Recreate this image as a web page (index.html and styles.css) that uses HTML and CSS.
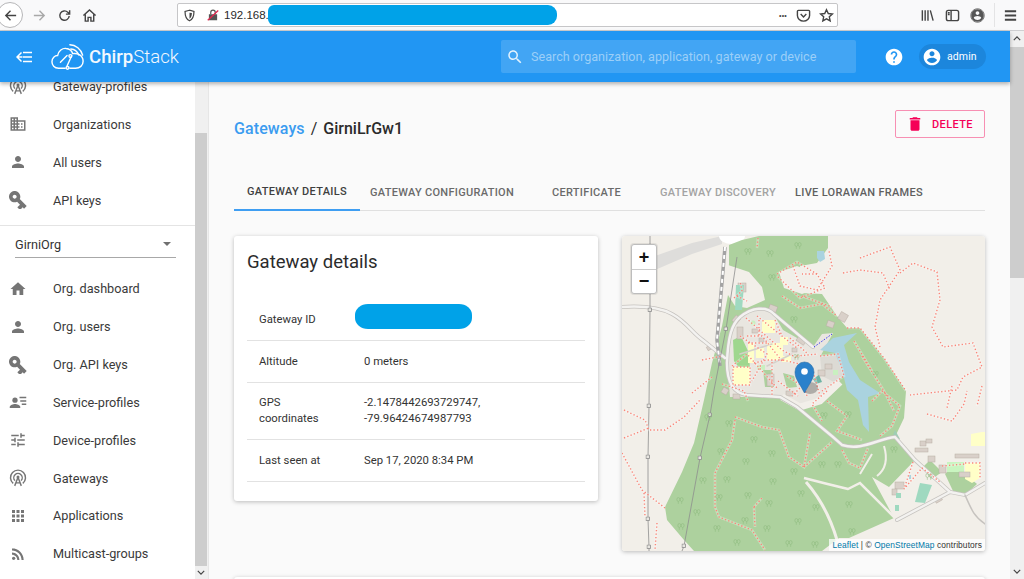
FILE: index.html
```html
<!DOCTYPE html>
<html lang="en">
<head>
<meta charset="utf-8">
<title>ChirpStack</title>
<link rel="stylesheet" href="styles.css">
</head>
<body>
<svg class="defs" width="0" height="0" aria-hidden="true">
  <symbol id="i-tower" viewBox="0 0 24 24"><g fill="none" stroke="currentColor" stroke-width="1.900"><path d="M5.600 19.200A10 10 0 1 1 18.400 19.200"/><path d="M8 15.500A5.600 5.600 0 1 1 16 15.500"/><path d="M12 11 7.600 22.500M12 11l4.400 11.500M9.300 18.500h5.400"/></g><circle cx="12" cy="10.500" r="2" fill="currentColor"/></symbol>
  <symbol id="i-domain" viewBox="0 0 24 24"><path d="M12 7V3H2v18h20V7H12zM6 19H4v-2h2v2zm0-4H4v-2h2v2zm0-4H4V9h2v2zm0-4H4V5h2v2zm4 12H8v-2h2v2zm0-4H8v-2h2v2zm0-4H8V9h2v2zm0-4H8V5h2v2zm10 12h-8v-2h2v-2h-2v-2h2v-2h-2V9h8v10zm-2-8h-2v2h2v-2zm0 4h-2v2h2v-2z"/></symbol>
  <symbol id="i-person" viewBox="0 0 24 24"><path d="M12 12c2.210 0 4-1.790 4-4s-1.790-4-4-4-4 1.790-4 4 1.790 4 4 4zm0 2c-2.670 0-8 1.340-8 4v2h16v-2c0-2.660-5.330-4-8-4z"/></symbol>
  <symbol id="i-key" viewBox="2.500 2.500 19 19"><path transform="rotate(45 12 12)" d="M7,14A2,2 0 0,1 5,12A2,2 0 0,1 7,10A2,2 0 0,1 9,12A2,2 0 0,1 7,14M12.650,10C11.830,7.670 9.610,6 7,6A6,6 0 0,0 1,12A6,6 0 0,0 7,18C9.610,18 11.830,16.330 12.650,14H17V18H21V14H23V10H12.650Z"/></symbol>
  <symbol id="i-home" viewBox="0 0 24 24"><path d="M10 20v-6h4v6h5v-8h3L12 3 2 12h3v8z"/></symbol>
  <symbol id="i-service" viewBox="0 0 24 24"><circle cx="8" cy="9.500" r="3.500"/><path d="M1 20v-1.500c0-2.700 4.700-4 7-4s7 1.300 7 4V20z"/><path d="M14 5h9v2h-9zM15 9.500h8v2h-8zM17 14h6v2h-6z"/></symbol>
  <symbol id="i-tune" viewBox="0 0 24 24"><path d="M3 17v2h6v-2H3zM3 5v2h10V5H3zm10 16v-2h8v-2h-8v-2h-2v6h2zM7 9v2H3v2h4v2h2V9H7zm14 4v-2H11v2h10zm-6-4h2V7h4V5h-4V3h-2v6z"/></symbol>
  <symbol id="i-apps" viewBox="0 0 24 24"><path d="M4 8h4V4H4v4zm6 12h4v-4h-4v4zm-6 0h4v-4H4v4zm0-6h4v-4H4v4zm6 0h4v-4h-4v4zm6-10v4h4V4h-4zm-6 4h4V4h-4v4zm6 6h4v-4h-4v4zm0 6h4v-4h-4v4z"/></symbol>
  <symbol id="i-rss" viewBox="0 0 24 24"><circle cx="6.180" cy="17.820" r="2.180"/><path d="M4 4.440v2.830c7.030 0 12.730 5.700 12.730 12.730h2.830c0-8.590-6.970-15.560-15.560-15.560zm0 5.660v2.830c3.900 0 7.070 3.170 7.070 7.070h2.830c0-5.470-4.430-9.900-9.900-9.900z"/></symbol>
  <symbol id="i-account" viewBox="0 0 24 24"><path d="M12 2C6.480 2 2 6.480 2 12s4.480 10 10 10 10-4.480 10-10S17.520 2 12 2zm0 3c1.660 0 3 1.340 3 3s-1.340 3-3 3-3-1.340-3-3 1.340-3 3-3zm0 14.200c-2.500 0-4.710-1.280-6-3.220.03-1.990 4-3.080 6-3.080 1.990 0 5.970 1.090 6 3.080-1.290 1.940-3.500 3.220-6 3.220z"/></symbol>
  <symbol id="t" viewBox="0 0 12 10"><g fill="none" stroke="#8dbb7e" stroke-width=".8"><ellipse cx="3.500" cy="3.500" rx="2.200" ry="3"/><ellipse cx="8.500" cy="3.500" rx="2.200" ry="3"/><path d="M3.500 6.500V10M8.500 6.500V10"/></g></symbol>
  <symbol id="p" viewBox="0 0 5 5"><rect x=".5" y=".5" width="3.500" height="3.500" fill="#e8e6e1" stroke="#8c8c8c" stroke-width=".8"/></symbol>
  <g id="trails" fill="none">
    <path d="M238 22 268 11 278 34 258 64 253 91 258 111"/>
    <path d="M278 37 291 27 315 36 318 64 310 91 321 111 351 107 360 131 341 141 335 154 288 159"/>
    <path d="M221 37 238 34 261 37 268 54M171 30 178 50 195 54 210 30 207 15"/>
    <path d="M155 38 175 26 195 38 203 52 178 62 155 40M136 2 135 12"/>
    <path d="M113 184 110 204 93 237 93 271 97 281 130 294 143 314M132 271 140 262M132 271 133 291"/>
    <path d="M113 181 140 191 157 194 167 221 182 231 188 197M182 231 210 206M220 214 227 227 238 232 246 212"/>
    <path d="M2 174 23 184 27 194 43 194 62 181 78 164M2 202 27 192M0 217 20 254 43 272M22 257 23 281M35 287 33 314"/>
    <path d="M70 157 90 141M80 124 100 120M115 60 125 65"/>
    <path d="M205 165 225 180 215 195 240 204M205 155 190 168 200 185M250 165 260 155 278 170 270 190 258 200M225 92 238 92 262 122 284 155M240 120 262 155 272 175M232 105 250 135"/>
    <path d="M178 72 200 68 215 80M160 60 178 72M180 60 210 71M195 38 180 38"/>
    <path d="M291 226 282 253 300 232 318 246M343 227H358V243M320 230 343 228"/>
    <path d="M305 178 330 185 342 168 345 155M330 150 325 172M360 150 355 170"/>
    <path d="M112 62 120 55 118 45M124 82 160 114 175 122M110 130 125 118 155 152M118 100 145 118 130 145M135 80 175 112M165 140 180 150 170 160"/>
    <path d="M125 100 140 100 160 125M137 84V100M153 84 160 100M126 107 145 107M132 127 145 124 161 124M111 131 128 131 128 149 111 149zM100 148 122 155 126 165M161 124 190 131 198 160M175 120 196 118M168 102 186 118M150 126 150 160M176 132 185 160M198 120 216 118 222 140 200 155M156 145 176 160"/>
  </g>
</svg>

<header class="browser">
  <span class="nav-back">
    <svg class="bi" viewBox="0 0 16 16"><path d="M14 8H3M8 3 3 8l5 5" class="bs"/></svg>
  </span>
  <svg class="bi forward" viewBox="0 0 16 16"><path d="M2 8h11M8 3l5 5-5 5" class="bs"/></svg>
  <svg class="bi reload" viewBox="0 0 16 16"><path d="M13 8.500A5 5 0 1 1 11.500 4.500L13.500 6.500M13.500 2.500v4h-4" class="bs"/></svg>
  <svg class="bi home" viewBox="0 0 16 16"><path d="M1.500 8 8 2l6.500 6M3.500 7v7h3v-4h3v4h3V7" class="bs"/></svg>
  <div class="urlbar">
    <svg class="ub-shield" viewBox="0 0 16 16"><path d="M8 1.500 2.500 3c0 6 1 9.500 5.500 11.500C12.500 12.500 13.500 9 13.500 3z" class="bs"/><path d="M8 4.500V12C10 11 10.800 8.500 11 5z" fill="#444"/></svg>
    <svg class="ub-lock" viewBox="0 0 16 16"><rect x="2.500" y="7" width="11" height="8" fill="#555"/><path d="M5 7V4.500a3 3 0 0 1 6 0V7" fill="none" stroke="#555" stroke-width="1.600"/><path d="M1 15 15 2" stroke="#e22850" stroke-width="1.800"/></svg>
    <span class="ub-text">192.168.</span>
    <span class="redact-url"></span>
    <span class="ub-right">
      <span class="ub-dots">•••</span>
      <svg class="bi" viewBox="0 0 16 16"><path d="M2.500 2.500h11c.6 0 1 .4 1 1V8a6.500 6 0 0 1-13 0V3.500c0-.6.4-1 1-1zM5 6.500 8 9.500l3-3" class="bs"/></svg>
      <svg class="bi" viewBox="0 0 16 16"><path d="M8 1.800 9.900 5.900l4.400.5-3.300 3 .9 4.400L8 11.600l-3.900 2.200.9-4.400-3.300-3 4.400-.5z" class="bs"/></svg>
    </span>
  </div>
  <div class="br-right">
    <svg class="bi" viewBox="0 0 16 16"><path d="M2.500 2.500v11M5.500 2.500v11M8.500 2.500v11M11 2.500l3 11" class="bs"/></svg>
    <svg class="bi" viewBox="0 0 16 16"><rect x="1.500" y="2.500" width="13" height="11" rx="2" class="bs"/><path d="M6.500 3v10" class="bs"/><path d="M3 5h2M3 7h2" class="bs"/></svg>
    <svg class="bi" viewBox="0 0 24 24"><use href="#i-account" fill="#555"/><circle cx="12" cy="12" r="10.800" fill="none" stroke="#555" stroke-width="1.300"/></svg>
    <span class="br-sep"></span>
    <svg class="bi" viewBox="0 0 16 16"><path d="M2 3.500h12M2 8h12M2 12.500h12" class="bs bs-thick"/></svg>
  </div>
</header>

<div class="window">
  <div class="app">
    <div class="appbar">
      <svg class="menu-ico" viewBox="0 0 16 12"><path d="M6.500 6H16M7 1.500h9M7 10.500h9M5.500 1.500 1 6l4.500 4.500M1 6h5" fill="none" stroke="#fff" stroke-width="1.500"/></svg>
      <svg class="logo" viewBox="0 0 36 28"><g fill="none" stroke="#fff" stroke-width="1.500" stroke-linecap="round"><path d="M15 26.500H8C3.500 26.500 1 23 1 19.500 1 15.500 4 13 7 13 8 8 12 5 16 5.500c3.500.3 6 2.500 7 5.500 5-1 11 2 11 8 0 4.500-3.500 7.500-8 7.500H20"/><path d="M20 1.500c6 0 12 5 13.500 11M21 6c4 .2 7 3 8.500 6.500"/><path d="M17 24 22 13M10 20l7-7"/><circle cx="17.500" cy="26" r="1.500"/><circle cx="20.500" cy="13.500" r="1.500"/></g></svg>
      <span class="brand"><b>Chirp</b>Stack</span>
      <label class="search">
        <svg class="search-ico" viewBox="0 0 24 24"><path d="M15.500 14h-.79l-.28-.27C15.410 12.590 16 11.110 16 9.500 16 5.910 13.090 3 9.500 3S3 5.910 3 9.500 5.910 16 9.500 16c1.610 0 3.090-.59 4.230-1.570l.27.28v.79l5 4.990L20.490 19l-4.990-5zm-6 0C7.010 14 5 11.990 5 9.500S7.010 5 9.500 5 14 7.010 14 9.500 11.990 14 9.500 14z"/></svg>
        <span>Search organization, application, gateway or device</span>
      </label>
      <svg class="help" viewBox="0 0 24 24"><path d="M12 2C6.480 2 2 6.480 2 12s4.480 10 10 10 10-4.480 10-10S17.520 2 12 2zm1 17h-2v-2h2v2zm2.070-7.750l-.9.920C13.450 12.900 13 13.500 13 15h-2v-.5c0-1.100.45-2.100 1.170-2.830l1.240-1.260c.37-.36.59-.86.59-1.410 0-1.100-.9-2-2-2s-2 .9-2 2H8c0-2.210 1.790-4 4-4s4 1.790 4 4c0 .88-.36 1.680-.93 2.250z"/></svg>
      <span class="chip"><svg viewBox="0 0 24 24"><use href="#i-account"/></svg><span>admin</span></span>
    </div>

    <div class="content">
      <nav class="sidebar">
        <ul class="menu menu-top">
          <li><svg><use href="#i-tower"/></svg>Gateway-profiles</li>
          <li><svg><use href="#i-domain"/></svg>Organizations</li>
          <li><svg><use href="#i-person"/></svg>All users</li>
          <li><svg><use href="#i-key"/></svg>API keys</li>
        </ul>
        <div class="org-select"><span>GirniOrg</span><i class="caret"></i></div>
        <ul class="menu menu-org">
          <li><svg><use href="#i-home"/></svg>Org. dashboard</li>
          <li><svg><use href="#i-person"/></svg>Org. users</li>
          <li><svg><use href="#i-key"/></svg>Org. API keys</li>
          <li><svg><use href="#i-service"/></svg>Service-profiles</li>
          <li><svg><use href="#i-tune"/></svg>Device-profiles</li>
          <li><svg><use href="#i-tower"/></svg>Gateways</li>
          <li><svg><use href="#i-apps"/></svg>Applications</li>
          <li><svg><use href="#i-rss"/></svg>Multicast-groups</li>
        </ul>
      </nav>
      <div class="side-scroll">
        <span class="thumb side-thumb"></span>
        <svg class="chev" viewBox="0 0 10 6"><path d="M1 1l4 4 4-4" fill="none" stroke="#444" stroke-width="1.500"/></svg>
      </div>

      <main class="main">
        <div class="title-row">
          <h1 class="crumbs"><a>Gateways</a><span class="slash">/</span><span>GirniLrGw1</span></h1>
          <button class="delete"><svg viewBox="0 0 24 24"><path d="M6 19c0 1.100.9 2 2 2h8c1.100 0 2-.9 2-2V7H6v12zM19 4h-3.500l-1-1h-5l-1 1H5v2h14V4z"/></svg>DELETE</button>
        </div>

        <div class="tabs">
          <span class="tab tab1 active">Gateway details</span>
          <span class="tab tab2">Gateway configuration</span>
          <span class="tab tab3">Certificate</span>
          <span class="tab tab4 disabled">Gateway discovery</span>
          <span class="tab tab5">Live LoRaWAN frames</span>
        </div>

        <div class="columns">
          <section class="card details">
            <h2>Gateway details</h2>
            <div class="row row-id"><span class="k">Gateway ID</span><span class="redact-id"></span></div>
            <div class="row"><span class="k">Altitude</span><span class="v">0 meters</span></div>
            <div class="row row-gps"><span class="k">GPS coordinates</span><span class="v">-2.1478442693729747,<br>-79.96424674987793</span></div>
            <div class="row"><span class="k">Last seen at</span><span class="v">Sep 17, 2020 8:34 PM</span></div>
          </section>

          <section class="card map">
            <svg class="map-art" viewBox="0 0 363 315">
              <rect width="363" height="315" fill="#f2efe9"/>
              <path d="M33 34V20L70 7 100 0V8L70 18z" fill="#dedddb"/>
              <ellipse cx="110" cy="0" rx="13" ry="8" fill="#fff"/>
              <!-- green areas -->
              <g fill="#add19e">
                <path d="M107 9 120 4 137 0H206V12L195 27 178 30 180 57 200 58 215 80 225 92 238 92 262 122 284 155 282 182 273 201 293 224 267 251 250 241 272 282 227 302 217 302 200 315H72L62 304 45 284 43 271 60 236 72 207 82 164 90 127 100 90 106 59 107 27z"/>
                <path d="M330 231 343 238 355 248 343 259 331 255 323 238z"/>
                <path d="M300 232 308 224 320 236 310 243z"/>
              </g>
              <path d="M100 27 127 36 140 51 143 64 125 72 113 70 106 59z" fill="#f2efe9"/>
              <path d="M157 36 175 30 195 38 200 50 180 58 162 52z" fill="#f2efe9"/>
              <!-- village -->
              <path d="M105 127 110 95 118 81 135 73 148 72 161 94 191 111 200 98 211 97 198 121 215 127 218 144 198 164 178 171 158 161 128 161 108 161z" fill="#e9e6e0"/>
              <path d="M111 104 119 100 126 115 128 131 118 133 112 125z" fill="#9fd78e"/>
              <path d="M141 134 150 134 152 151 143 151zM161 137 172 140 175 151 165 152z" fill="#add19e"/>
              <path d="M198 120 216 118 222 140 212 146 200 140z" fill="#dcdad4"/>
              <g fill="#ffffc8">
                <rect x="140" y="84" width="13" height="13"/><rect x="126" y="107" width="6" height="20"/><rect x="145" y="107" width="16" height="17"/><rect x="111" y="131" width="17" height="18"/><rect x="158" y="101" width="8" height="8"/><rect x="134" y="112" width="8" height="10"/><rect x="160" y="120" width="9" height="6"/>
                <path d="M349 198 360 196 363 196V210L349 210z"/><path d="M343 227H358V242L350 247 343 243z"/>
              </g>
              <rect x="325" y="226" width="17" height="10" fill="#c9f5c0"/>
              <circle cx="131" cy="87" r="2.500" fill="#c9f0c0"/>
              <rect x="135" y="129" width="8" height="5" fill="#c9f0c0"/>
              <g fill="#d9d0c9" stroke="#b9aea4" stroke-width=".5">
                <rect x="116" y="47" width="8" height="9"/><rect x="147" y="69" width="8" height="6" transform="rotate(20 150 72)"/><rect x="111" y="80" width="6" height="7" transform="rotate(40 114 84)"/><rect x="115" y="91" width="6" height="12"/><rect x="85" y="110" width="5" height="4" transform="rotate(-30 87 112)"/><rect x="175" y="102" width="9" height="5" transform="rotate(35 179 104)"/><rect x="145" y="138" width="7" height="12"/><rect x="164" y="155" width="7" height="5"/><rect x="298" y="205" width="6" height="5"/><rect x="304" y="203" width="6" height="4"/><rect x="293" y="212" width="13" height="4"/><rect x="306" y="220" width="7" height="6"/><rect x="317" y="229" width="7" height="8"/><rect x="273" y="246" width="9" height="7"/><rect x="270" y="253" width="5" height="6"/><rect x="333" y="218" width="24" height="4"/><rect x="337" y="236" width="11" height="5"/><rect x="313" y="263" width="7" height="3" transform="rotate(-30 316 264)"/><rect x="217" y="77" width="8" height="8" transform="rotate(30 221 81)"/><rect x="205" y="85" width="7" height="6" transform="rotate(20 208 88)"/><rect x="203" y="128" width="7" height="5"/><rect x="196" y="134" width="7" height="6"/><rect x="100" y="152" width="6" height="6" transform="rotate(30 103 155)"/><rect x="111" y="158" width="7" height="5"/><rect x="130" y="93" width="6" height="4"/><rect x="137" y="102" width="5" height="4"/><rect x="170" y="112" width="5" height="4"/></g>
              <!-- water -->
              <path d="M198 114 211 102 235 97 222 109 227 126 238 144 258 157 246 161 247 196 241 189 236 164 225 154 220 134 213 117z" fill="#aad3df"/>
              <path d="M195 15 202 15 203 23 198 26 195 22z" fill="#aad3df"/>
              <rect x="211" y="134" width="5" height="5" fill="#c9f0c0"/>
              <path d="M191 143 197 139 200 146 194 148z" fill="#6fb4a4"/>
              <g fill="#9fd9c0">
                <path d="M298 247 310 249 303 267 293 266z"/><rect x="274" y="257" width="5" height="5"/><rect x="273" y="269" width="4" height="6"/>
                <path d="M114 49 122 49 120 74 113 74z"/>
              </g>
              <rect x="287" y="239" width="2" height="4" fill="#aad3df"/>
              <path d="M273 194 278 203 270 202z" fill="#9fcdb5"/>
              <!-- pale tracks in forest -->
              <g fill="none" stroke="#f2efe9">
                <path d="M182 242 Q205 248 226 253 L238 247 L275 284" stroke-width="2.500"/>
                <path d="M184 246 Q205 270 215 304" stroke-width="3"/>
                <path d="M250 218 238 238M262 210Q268 230 255 240" stroke-width="2"/>
                <path d="M160 161 178 171 198 165 218 146" stroke-width="7"/>
              </g>
              <!-- roads -->
              <g fill="none" stroke-linecap="round">
                <path d="M105 127C106 100 110 88 118 81 130 71 145 70 152 78L191 111M105 127C105 145 110 157 125 159L158 161 175 171 211 201 220 209C240 215 255 203 273 201L293 224 328 256 343 259 363 247M0 71C15 70 35 70 50 78 65 86 70 97 82 105L103 122M328 256 275 284" stroke="#c6c3bf" stroke-width="4"/>
                <path d="M105 127C106 100 110 88 118 81 130 71 145 70 152 78L191 111M105 127C105 145 110 157 125 159L158 161 175 171 211 201 220 209C240 215 255 203 273 201L293 224 328 256 343 259 363 247M0 71C15 70 35 70 50 78 65 86 70 97 82 105L103 122M328 256 275 284" stroke="#f3f2f0" stroke-width="2.500"/>
                <path d="M343 259C350 275 352 280 363 288" stroke="#c6c3bf" stroke-width="1.500"/>
                <path d="M145 130 170 118M118 118 150 108" stroke="#d4d0ca" stroke-width="1.500"/>
              </g>
              <path d="M192 111 210 98" stroke="#3a3af0" stroke-width="1" stroke-dasharray="1.500 1.500" fill="none"/>
              <!-- rail -->
              <path d="M103 11 95 104 98 130" fill="none" stroke="#a3a3a3" stroke-width="3.500"/>
              <path d="M103 11 95 104 98 130" fill="none" stroke="#fff" stroke-width="2" stroke-dasharray="4 4"/>
              <!-- power lines -->
              <g fill="none" stroke="#8e8e8e" stroke-width=".8">
                <path d="M28 0V74L27 170 26 221 26 283 27 311V315"/>
                <path d="M115 21 104 93 92 154 88 179 78 222 62 310 60 315"/>
              </g>
              <use href="#p" x="25.500" y="71.500" width="5" height="5"/><use href="#p" x="24.500" y="167.500" width="5" height="5"/><use href="#p" x="23.500" y="218.500" width="5" height="5"/><use href="#p" x="23.500" y="280.500" width="5" height="5"/><use href="#p" x="24.500" y="308.500" width="5" height="5"/><use href="#p" x="85.500" y="176.500" width="5" height="5"/><use href="#p" x="75.500" y="219.500" width="5" height="5"/><use href="#p" x="59.500" y="307.500" width="5" height="5"/><use href="#p" x="101.500" y="90.500" width="5" height="5"/>
              <!-- trails -->
              <use href="#trails" stroke="#fff" stroke-width="2.600" opacity=".3"/>
              <use href="#trails" stroke="#fa8578" stroke-width="1.400" stroke-dasharray="1.300 2.200"/>
              <!-- trees -->
              <g>
                <use href="#t" x="122" y="12" width="8" height="7"/><use href="#t" x="144" y="14" width="8" height="7"/><use href="#t" x="172" y="6" width="8" height="7"/><use href="#t" x="146" y="38" width="8" height="7"/><use href="#t" x="168" y="80" width="8" height="7"/><use href="#t" x="82" y="178" width="8" height="7"/><use href="#t" x="103" y="184" width="8" height="7"/><use href="#t" x="128" y="200" width="8" height="7"/><use href="#t" x="95" y="212" width="8" height="7"/><use href="#t" x="146" y="214" width="8" height="7"/><use href="#t" x="120" y="222" width="8" height="7"/><use href="#t" x="168" y="232" width="8" height="7"/><use href="#t" x="147" y="242" width="8" height="7"/><use href="#t" x="101" y="240" width="8" height="7"/><use href="#t" x="77" y="241" width="8" height="7"/><use href="#t" x="54" y="261" width="8" height="7"/><use href="#t" x="93" y="258" width="8" height="7"/><use href="#t" x="122" y="256" width="8" height="7"/><use href="#t" x="175" y="254" width="8" height="7"/><use href="#t" x="143" y="264" width="8" height="7"/><use href="#t" x="190" y="268" width="8" height="7"/><use href="#t" x="223" y="265" width="8" height="7"/><use href="#t" x="71" y="273" width="8" height="7"/><use href="#t" x="119" y="281" width="8" height="7"/><use href="#t" x="172" y="282" width="8" height="7"/><use href="#t" x="55" y="287" width="8" height="7"/><use href="#t" x="91" y="289" width="8" height="7"/><use href="#t" x="141" y="289" width="8" height="7"/><use href="#t" x="226" y="292" width="8" height="7"/><use href="#t" x="111" y="303" width="8" height="7"/><use href="#t" x="163" y="304" width="8" height="7"/><use href="#t" x="189" y="305" width="8" height="7"/><use href="#t" x="268" y="210" width="8" height="7"/><use href="#t" x="303" y="237" width="8" height="7"/><use href="#t" x="212" y="225" width="8" height="7"/><use href="#t" x="196" y="225" width="8" height="7"/><use href="#t" x="171" y="118" width="7" height="6"/><use href="#t" x="250" y="135" width="7" height="6"/><use href="#t" x="198" y="176" width="8" height="7"/><use href="#t" x="222" y="175" width="8" height="7"/>
              </g>
              <!-- marker -->
              <ellipse cx="188" cy="152" rx="8" ry="6" fill="#000" opacity=".25"/>
              <path d="M182.500 157C178 148 173 143 173 136A9.500 10 0 0 1 192 136C192 143 187 148 182.500 157z" fill="#2a81cb" stroke="#2a6fa8" stroke-width=".6"/>
              <circle cx="182.500" cy="135.500" r="3.300" fill="#fff"/>
            </svg>
            <div class="zoom"><span>+</span><span>−</span></div>
            <div class="attrib"><a>Leaflet</a> | © <a>OpenStreetMap</a> contributors</div>
          </section>
        </div>

        <section class="card next"></section>
      </main>
    </div>
  </div>

  <div class="page-scroll">
    <svg class="chev chev-up" viewBox="0 0 10 6"><path d="M1 5l4-4 4 4" fill="none" stroke="#444" stroke-width="1.500"/></svg>
    <span class="thumb page-thumb"></span>
    <svg class="chev" viewBox="0 0 10 6"><path d="M1 1l4 4 4-4" fill="none" stroke="#444" stroke-width="1.500"/></svg>
  </div>
</div>
</body>
</html>
```
FILE: styles.css
```css
* { box-sizing: border-box; }
html, body { margin: 0; height: 100%; overflow: hidden; }
body {
  width: 1024px; height: 579px;
  display: flex; flex-direction: column;
  font-family: Roboto, "Liberation Sans", sans-serif;
  color: #212121;
  background: #fafafa;
}
.defs { position: absolute; }
ul { list-style: none; margin: 0; padding: 0; }

/* browser chrome */
.browser {
  height: 31px; flex: none;
  display: flex; align-items: center;
  background: #f9f9fa;
  border-bottom: 1px solid #cfcfd1;
}
.bi { width: 15px; height: 15px; flex: none; display: block; }
.bs { fill: none; stroke: #444; stroke-width: 1.500; }
.bs-thick { stroke-width: 2; }
.nav-back {
  width: 26px; height: 26px; margin-left: -3px; flex: none;
  display: flex; align-items: center; justify-content: center;
  background: #fff; border: 1px solid #b6b6b8; border-radius: 50%;
}
.forward { margin-left: 9px; }
.forward .bs { stroke: #a8a8a8; }
.reload { margin-left: 10px; }
.home { margin-left: 10px; }
.urlbar {
  margin-left: 80px; width: 661px; height: 24px;
  display: flex; align-items: center;
  background: #fff; border: 1px solid #c6c6c8; border-radius: 2px;
  padding-left: 5px;
  position: relative;
}
.ub-shield { width: 13px; height: 13px; }
.ub-lock { width: 12px; height: 12px; margin-left: 11px; }
.ub-text { margin-left: 5px; font: 11.500px "Liberation Sans", sans-serif; color: #2a2a2a; }
.redact-url {
  position: absolute; left: 90px; top: 1px; width: 289px; height: 20px;
  background: #00a2e8; border-radius: 6px 9px 9px 6px;
}
.ub-right { margin-left: auto; display: flex; align-items: center; gap: 8px; padding-right: 3px; }
.ub-dots { font: 7px "Liberation Sans", sans-serif; color: #444; letter-spacing: .2px; margin-right: 1px; }
.br-right { display: flex; align-items: center; gap: 10px; margin-left: 82px; }
.br-sep { width: 1px; height: 24px; background: #e4e4e5; margin: 0 -2px 0 -1px; }

/* window */
.window { flex: 1; min-height: 0; display: flex; }
.app { flex: 1; min-width: 0; display: flex; flex-direction: column; }
.appbar {
  height: 51px; flex: none;
  display: flex; align-items: center;
  background: #2196f3; color: #fff;
  box-shadow: 0 2px 4px rgba(0,0,0,.3);
  position: relative; z-index: 2;
}
.menu-ico { width: 16px; height: 12px; margin-left: 16px; flex: none; }
.logo { width: 34px; height: 27px; margin-left: 19px; flex: none; }
.brand { margin-left: 4px; font-size: 18.600px; font-weight: 300; width: 96px; color: #f2f8fe; }
.brand b { font-weight: 500; }
.search {
  margin-left: 316px; width: 355px; height: 33px;
  display: flex; align-items: center;
  background: rgba(255,255,255,.15); border-radius: 2px;
  font-size: 12.600px; color: #9ccff8;
}
.search-ico { width: 18px; height: 18px; fill: #e3f2fd; margin: 0 7px 0 5px; flex: none; }
.help { width: 20px; height: 20px; fill: #fff; margin-left: 28px; flex: none; }
.chip {
  margin-left: 15px; width: 67px; height: 25px;
  display: flex; align-items: center;
  background: #1c86dc; border-radius: 13px;
  font-size: 10.500px; letter-spacing: .1px;
}
.chip svg { width: 20px; height: 20px; fill: #fff; margin: 0 5px 0 3px; flex: none; }

.content { flex: 1; min-height: 0; display: flex; }

/* sidebar */
.sidebar { width: 195px; flex: none; background: #fff; overflow: hidden; }
.menu li {
  height: 38px; display: flex; align-items: center;
  font-size: 12.700px; color: #3a3a3a;
}
.menu svg { width: 18px; height: 18px; fill: #757575; color: #757575; margin: 0 26px 0 9px; flex: none; }
.menu-top { margin-top: -15px; padding-bottom: 6px; border-bottom: 1px solid #e4e4e4; }
.org-select {
  margin: 8px 19px 0 15px; height: 24px; padding-bottom: 3px;
  display: flex; align-items: center; justify-content: space-between;
  border-bottom: 1px solid #a8a8a8;
  font-size: 12.700px; color: #333;
}
.caret { width: 0; height: 0; margin-right: 5px; border: 4px solid transparent; border-top: 4px solid #707070; border-bottom: 0; }
.menu-org { margin-top: 12px; }
.menu-org li { height: 37.850px; }
.side-scroll {
  width: 14px; flex: none;
  display: flex; flex-direction: column; align-items: center;
  background: #f0f0f0; border-right: 1px solid #e6e6e6;
  padding-right: 1px;
}
.thumb { display: block; width: 100%; background: #cdcdcd; }
.side-thumb { height: 433px; margin-top: 51px; }
.chev { width: 8px; height: 5px; margin-top: 4px; flex: none; }

/* main */
.main { flex: 1; min-width: 0; padding: 28px 25px 0 25px; overflow: hidden; }
.title-row { display: flex; align-items: center; justify-content: space-between; height: 28px; }
.crumbs { margin: 8px 0 0; font-size: 16px; font-weight: 500; display: flex; gap: 6px; color: #2b2b2b; }
.crumbs a { color: #3b9cf0; letter-spacing: .1px; }
.slash { font-weight: 400; }
.delete {
  width: 90px; height: 28px;
  display: flex; align-items: center; justify-content: center; gap: 8px;
  background: transparent; border: 1px solid #f78fb3; border-radius: 2px;
  font: 500 11px Roboto, sans-serif; letter-spacing: .4px; color: #f50057;
  padding: 0 0 0 3px;
}
.delete svg { width: 18px; height: 18px; fill: #f50057; margin-left: -4px; }
.tabs {
  margin-top: 34px; height: 39px;
  display: flex;
  border-bottom: 1px solid #e0e0e0;
}
.tab {
  height: 39px; padding-top: 1px; display: flex; align-items: center; justify-content: center;
  font-size: 11px; font-weight: 500; letter-spacing: .3px; text-transform: uppercase;
  color: #6a6a6a; white-space: nowrap;
}
.tab1 { width: 126px; } .tab2 { width: 164px; } .tab3 { width: 125px; } .tab4 { width: 138px; } .tab5 { width: 144px; }
.tab.active { color: #3f3f3f; border-bottom: 2px solid #3f9ef2; }
.tab.disabled { color: #a3a3a3; }
.tab5 { color: #5f5f5f; }

.columns { margin-top: 25px; display: flex; align-items: flex-start; gap: 24px; }
.card { background: #fff; border-radius: 3px; box-shadow: 0 1px 4px rgba(0,0,0,.25); }
.details { width: 364px; height: 265px; padding: 13px 13px 0 13px; }
.details h2 { margin: 0 0 25px; font-size: 18.500px; font-weight: 400; line-height: 26px; color: #2b2b2b; }
.row {
  height: 42px; display: flex; align-items: center;
  border-bottom: 1px solid #e2e2e2; padding-left: 12px;
  font-size: 11.300px; line-height: 16px; color: #333;
}
.row-id { height: 41px; }
.row-gps { height: 57px; }
.k { width: 105px; flex: none; padding-right: 30px; }
.redact-id { width: 117px; height: 25px; margin: -8px 0 0 -9px; background: #00a2e8; border-radius: 13px / 11px; }

.map { width: 363px; height: 315px; position: relative; overflow: hidden; }
.map-art { display: block; width: 363px; height: 315px; filter: blur(.35px); }
.zoom {
  position: absolute; left: 9px; top: 8px; width: 26px;
  display: flex; flex-direction: column;
  border: 1px solid #bdbdbd; border-radius: 3px; background: #fff;
  box-shadow: 0 0 0 1px rgba(0,0,0,.08);
}
.zoom span { height: 24px; display: flex; align-items: center; justify-content: center; font: 700 18px "Liberation Sans", sans-serif; color: #111; }
.zoom span + span { border-top: 1px solid #ccc; }
.attrib {
  position: absolute; right: 0; bottom: 0; height: 12px; padding: 0 3px;
  background: rgba(255,255,255,.75);
  font: 8.400px/12px "Liberation Sans", sans-serif; color: #333; letter-spacing: .1px;
  white-space: nowrap;
}
.attrib a { color: #0078a8; }
.next { margin-top: 26px; height: 200px; }

.page-scroll {
  width: 14px; flex: none;
  display: flex; flex-direction: column; align-items: center;
  background: #f0f0f0;
}
.chev-up { margin-top: 5px; }
.page-thumb { height: 231px; margin-top: 6px; }
.page-scroll .chev:last-child { margin-top: auto; margin-bottom: 5px; }
```
